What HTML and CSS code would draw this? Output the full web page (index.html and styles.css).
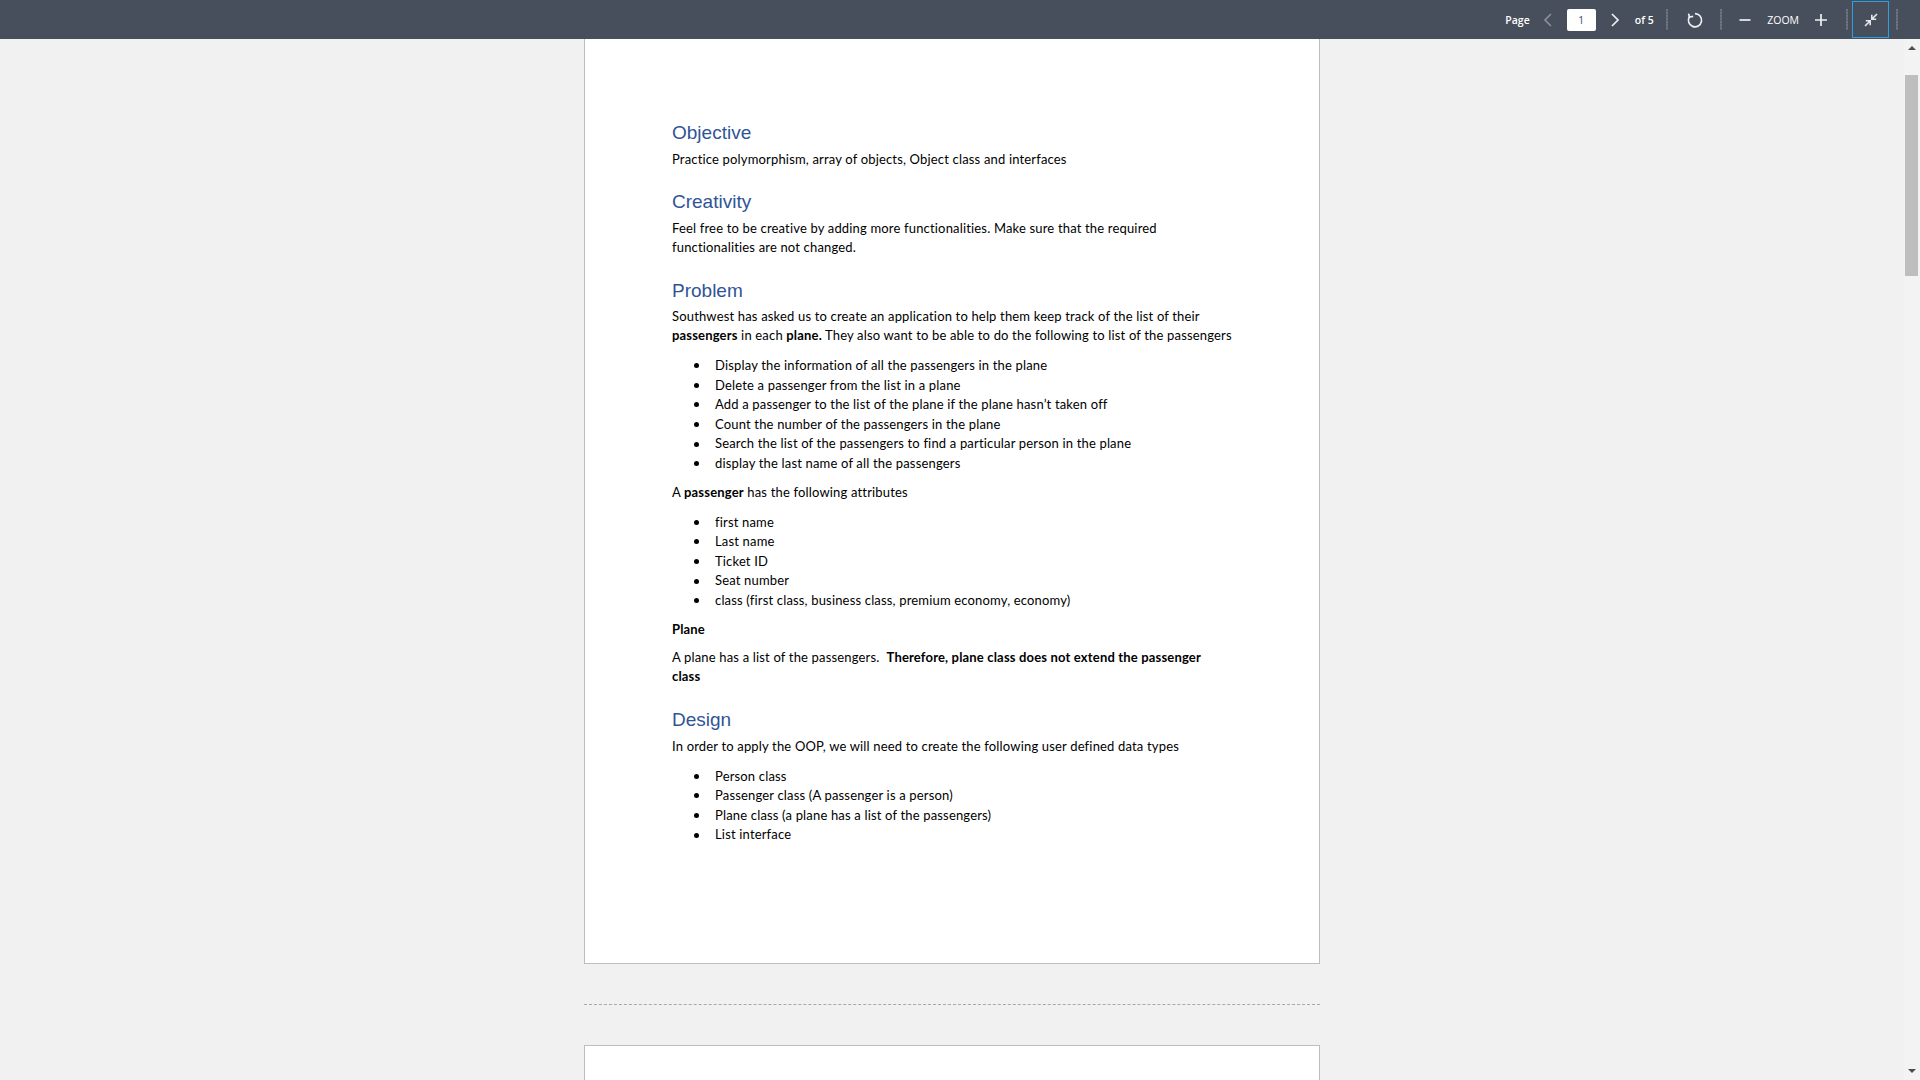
FILE: index.html
```html
<!DOCTYPE html>
<html lang="en">
<head>
<meta charset="utf-8">
<title>Document viewer</title>
<link rel="stylesheet" href="styles.css">
</head>
<body>
<header class="toolbar">
  <span class="tb-label label-page">Page</span>
  <button class="tb-btn btn-prev" aria-label="Previous page">
    <svg width="10" height="14" viewBox="0 0 10 14"><path class="stroke-dim" d="M8 1 L2 7 L8 13"/></svg>
  </button>
  <input class="page-input" value="1" aria-label="Page number">
  <button class="tb-btn btn-next" aria-label="Next page">
    <svg width="10" height="14" viewBox="0 0 10 14"><path class="stroke-light" d="M2 1 L8 7 L2 13"/></svg>
  </button>
  <span class="tb-label label-of">of 5</span>
  <span class="sep sep-a"></span>
  <button class="tb-btn btn-reload" aria-label="Rotate">
    <svg width="18" height="18" viewBox="0 0 18 18"><path class="stroke-light" d="M9 2.6 A6.6 6.6 0 1 1 3.4 5.7"/><path class="stroke-light" d="M2.6 2.6 L3.4 6 L7.2 5.4"/></svg>
  </button>
  <span class="sep sep-b"></span>
  <button class="tb-btn btn-minus" aria-label="Zoom out">
    <svg width="12" height="12" viewBox="0 0 12 12"><path class="stroke-light" d="M0.5 6 H11.5"/></svg>
  </button>
  <span class="tb-label label-zoom">ZOOM</span>
  <button class="tb-btn btn-plus" aria-label="Zoom in">
    <svg width="12" height="12" viewBox="0 0 12 12"><path class="stroke-light" d="M0 6 H12 M6 0 V12"/></svg>
  </button>
  <span class="sep sep-c"></span>
  <button class="tb-btn btn-full" aria-label="Exit full screen">
    <svg width="14" height="14" viewBox="0 0 14 14"><path class="stroke-arrow" d="M13 1 L8 6 M7.8 1.8 V6.2 H12.2 M1 13 L6 8 M1.8 7.8 H6.2 V12.2"/></svg>
  </button>
  <span class="sep sep-d"></span>
</header>
<div class="viewport">
  <main class="pages">
    <article class="sheet sheet-first">
      <h2 class="h-first">Objective</h2>
      <p class="lead">Practice polymorphism, array of objects, Object class and interfaces</p>
      <h2>Creativity</h2>
      <p class="lead">Feel free to be creative by adding more functionalities. Make sure that the required<br>functionalities are not changed.</p>
      <h2 class="h-problem">Problem</h2>
      <p class="lead">Southwest has asked us to create an application to help them keep track of the list of their<br><strong>passengers</strong> in each <strong>plane.</strong> They also want to be able to do the following to list of the passengers</p>
      <ul>
        <li>Display the information of all the passengers in the plane</li>
        <li>Delete a passenger from the list in a plane</li>
        <li>Add a passenger to the list of the plane if the plane hasn’t taken off</li>
        <li>Count the number of the passengers in the plane</li>
        <li>Search the list of the passengers to find a particular person in the plane</li>
        <li>display the last name of all the passengers</li>
      </ul>
      <p>A <strong>passenger</strong> has the following attributes</p>
      <ul>
        <li>first name</li>
        <li>Last name</li>
        <li>Ticket ID</li>
        <li>Seat number</li>
        <li>class (first class, business class, premium economy, economy)</li>
      </ul>
      <p><strong>Plane</strong></p>
      <p>A plane has a list of the passengers.&nbsp; <strong>Therefore, plane class does not extend the passenger<br>class</strong></p>
      <h2 class="h-design">Design</h2>
      <p class="lead">In order to apply the OOP, we will need to create the following user defined data types</p>
      <ul>
        <li>Person class</li>
        <li>Passenger class (A passenger is a person)</li>
        <li>Plane class (a plane has a list of the passengers)</li>
        <li>List interface</li>
      </ul>
    </article>
    <hr class="page-break">
    <article class="sheet sheet-next"></article>
  </main>
  <aside class="scrollbar" aria-hidden="true">
    <span class="arrow-up"></span>
    <span class="thumb"></span>
    <span class="arrow-down"></span>
  </aside>
</div>
</body>
</html>
```
FILE: styles.css
```css
* { box-sizing: border-box; }
html, body { height: 100%; }
body {
  margin: 0;
  height: 1080px;
  overflow: hidden;
  display: flex;
  flex-direction: column;
  background: #f1f1f1;
  font-family: "Lato", "Open Sans", sans-serif;
}
.toolbar {
  flex: 0 0 39px;
  height: 39px;
  display: flex;
  align-items: center;
  justify-content: flex-end;
  padding-right: 22px;
  background: #474f5c;
  color: #fff;
}
.tb-label {
  font-family: "Open Sans", sans-serif;
  font-size: 10.5px;
  font-weight: 600;
  line-height: 14px;
  color: #fff;
  white-space: nowrap;
}
.tb-btn {
  display: flex;
  align-items: center;
  justify-content: center;
  padding: 0;
  border: 0;
  background: none;
}
.tb-btn svg { display: block; fill: none; }
.stroke-dim { stroke: #8d929b; stroke-width: 1.6; fill: none; }
.stroke-light { stroke: #eef0f1; stroke-width: 1.7; fill: none; }
.stroke-arrow { stroke: #e6e7e8; stroke-width: 1.6; fill: none; }
.label-page { margin-right: 13px; }
.btn-prev { width: 10px; margin-right: 14px; }
.page-input {
  width: 29px;
  height: 22px;
  margin: 0 14px 0 0;
  padding: 0;
  border: 0;
  border-radius: 2px;
  background: #fff;
  color: #4a5568;
  font-family: "Open Sans", sans-serif;
  font-size: 11px;
  text-align: center;
}
.btn-next { width: 10px; margin-right: 15px; }
.label-of { margin-right: 12px; }
.sep {
  width: 2px;
  height: 21px;
  background: repeating-linear-gradient(to bottom, #6d7480 0 2px, #5f6672 2px 3px);
}
.sep-a { margin-right: 18.5px; }
.btn-reload { width: 18px; margin-right: 16px; }
.sep-b { margin-right: 17px; }
.btn-minus { width: 12px; margin-right: 16px; }
.label-zoom { margin-right: 16px; font-size: 10.5px; font-weight: 400; }
.btn-plus { width: 12px; margin-right: 19px; }
.sep-c { margin-right: 4px; }
.btn-full {
  width: 37px;
  height: 37px;
  margin-right: 7px;
  border: 1px solid #2e9fe0;
}
.viewport {
  flex: 1 1 auto;
  display: flex;
  min-height: 0;
}
.pages {
  flex: 1 1 auto;
  min-width: 0;
  overflow: hidden;
  display: flex;
  flex-direction: column;
  align-items: center;
}
.sheet {
  flex: none;
  width: 736px;
  background: #fff;
  border: 1px solid #bdbdbd;
}
.sheet-first {
  height: 925px;
  border-top: 0;
  padding: 82px 0 0 87px;
  color: #000;
  font-size: 13px;
  letter-spacing: 0.17px;
  line-height: 19px;
}
.sheet-next { height: 200px; }
.page-break {
  flex: none;
  width: 736px;
  height: 0;
  margin: 40px 0;
  border: 0;
  border-top: 1px dashed #a9a9a9;
}
h2 {
  margin: 21px 0 0;
  font-family: "Liberation Sans", Arial, sans-serif;
  font-size: 19px;
  font-weight: 400;
  letter-spacing: 0;
  line-height: 24px;
  color: #2f5597;
}
h2.h-first { margin-top: 0; }
h2.h-problem { margin: 22px 0 -1px; }
h2.h-design { margin-top: 22px; }
p { margin: 9px 0 0; white-space: nowrap; }
p.lead { margin-top: 5px; }
strong { font-weight: 700; }
ul {
  list-style: none;
  margin: 11px 0 0;
  padding: 0 0 0 22px;
  line-height: 19.6px;
}
li {
  display: flex;
  align-items: center;
  white-space: nowrap;
}
li::before {
  content: "";
  flex: none;
  width: 5px;
  height: 5px;
  margin-right: 16px;
  border-radius: 50%;
  background: #000;
}
.scrollbar {
  flex: 0 0 16px;
  width: 16px;
  display: flex;
  flex-direction: column;
  align-items: center;
  background: #f3f3f3;
}
.arrow-up, .arrow-down {
  flex: none;
  width: 0;
  height: 0;
  margin-right: 1px;
  border-left: 4px solid transparent;
  border-right: 4px solid transparent;
}
.arrow-up { margin-top: 7px; border-bottom: 4px solid #4d4d4d; }
.thumb {
  flex: none;
  width: 13px;
  height: 201px;
  margin: 25px 1px 0 0;
  background: #bebebe;
}
.arrow-down { margin-top: auto; margin-bottom: 7px; border-top: 4px solid #4d4d4d; }
```
